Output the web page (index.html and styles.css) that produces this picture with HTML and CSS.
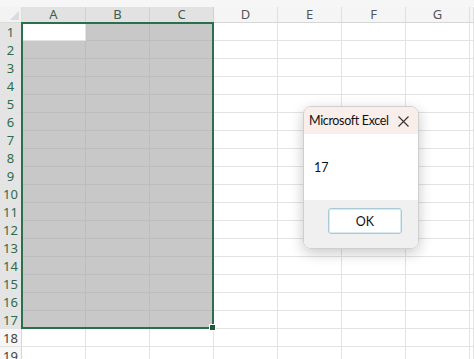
FILE: index.html
```html
<!DOCTYPE html>
<html lang="en">
<head>
  <meta charset="UTF-8" />
  <title>Microsoft Excel</title>
  <link rel="stylesheet" href="styles.css">
</head>
<body>
  <div class="topbar"></div>
  <div class="sheet" id="sheet">
    <div class="selection"><span class="handle"></span></div>
  </div>

  <div class="msgbox">
    <div class="msg-title">
      <span>Microsoft Excel</span>
      <svg class="close" width="11" height="11" viewBox="0 0 11 11">
        <path d="M0.5 0.5 L10.5 10.5 M10.5 0.5 L0.5 10.5" stroke="#333" stroke-width="1.1" fill="none"/>
      </svg>
    </div>
    <div class="msg-body">17</div>
    <div class="msg-foot">
      <button class="ok">OK</button>
    </div>
  </div>

  <script>
    // last column is only a sliver, its letter sits off screen
    const cols = ['A','B','C','D','E','F','G',''];
    const sheet = document.getElementById('sheet');
    let html = '<div class="corner"></div>';
    cols.forEach((c, i) => {
      html += `<div class="colhead${i < 3 ? ' sel' : ''}">${c}</div>`;
    });
    for (let r = 1; r <= 19; r++) {
      html += `<div class="rowhead${r <= 17 ? ' sel' : ''}">${r}</div>`;
      cols.forEach((c, i) => {
        let cls = 'cell';
        if (i < 3 && r <= 17) cls += (i === 0 && r === 1) ? ' active' : ' picked';
        html += `<div class="${cls}"></div>`;
      });
    }
    sheet.insertAdjacentHTML('afterbegin', html);
  </script>
</body>
</html>
```

FILE: styles.css
```css
body {
  margin: 0;
  font-family: "Noto Sans", "Open Sans", sans-serif;
  background: #fff;
  overflow: hidden;
  position: relative;
  height: 359px;
}
.topbar { height: 7px; background: #f6f6f6; }

.sheet {
  position: relative;
  display: grid;
  grid-template-columns: 22px repeat(7, 64px) 1fr;
  grid-template-rows: 16px repeat(19, 18px);
}
.sheet > div { box-sizing: border-box; }

.corner {
  background: #f3f3f3;
  border-right: 1px solid #dcdcdc;
  border-bottom: 1px solid #dcdcdc;
  position: relative;
}
.corner::after {
  content: "";
  position: absolute;
  right: 2px; bottom: 2px;
  border-left: 9px solid transparent;
  border-bottom: 9px solid #dadada;
}
.colhead {
  background: #f5f5f5;
  color: #555;
  font-size: 13px;
  line-height: 15px;
  text-align: center;
  border-right: 1px solid #e0e0e0;
  border-bottom: 1px solid #d6d6d6;
}
.colhead.sel { background: #e2e2e2; color: #3c5e4c; border-right-color: #d2d2d2; }
.rowhead {
  background: #f7f7f7;
  color: #444;
  font-size: 13px;
  line-height: 18px;
  text-align: center;
  border-right: 1px solid #d6d6d6;
  border-bottom: 1px solid #e3e3e3;
}
.rowhead.sel { background: #e4e4e4; color: #2e6b4b; }
.cell {
  border-right: 1px solid #e3e3e3;
  border-bottom: 1px solid #e3e3e3;
}
.cell.picked { background: #c8c8c8; border-color: #bdbdbd; }
.cell.active { background: #fff; }

.selection {
  position: absolute;
  grid-column: 2 / 5;
  grid-row: 2 / 19;
  top: -1px; left: -1px; right: 0; bottom: 0;
  border: 2px solid #2b6f4c;
  z-index: 1;
}
.handle {
  position: absolute;
  right: -4px; bottom: -4px;
  width: 5px; height: 5px;
  background: #1f5a3c;
  border: 1px solid #fff;
}

.msgbox {
  position: absolute;
  left: 303px; top: 106px;
  width: 116px; height: 143px;
  border: 1px solid #cfcfcf;
  border-radius: 8px;
  box-sizing: border-box;
  overflow: hidden;
  box-shadow: 0 4px 14px rgba(0, 0, 0, 0.22);
  display: flex;
  flex-direction: column;
  z-index: 2;
  font-family: Lato, "Noto Sans", sans-serif;
}
.msg-title {
  height: 27px;
  background: #faeeeb;
  display: flex;
  align-items: center;
  justify-content: space-between;
  padding: 0 9px 0 5px;
  font-size: 12.5px;
  letter-spacing: -0.35px;
  color: #111;
  white-space: nowrap;
}
.close { margin-top: 1px; }
.msg-body {
  height: 66px;
  background: #fff;
  padding-left: 10px;
  font-size: 12.5px;
  line-height: 68px;
  color: #111;
}
.msg-foot {
  flex: 1;
  background: #f0f0f0;
  padding: 8px 0 0 24px;
}
.ok {
  width: 74px; height: 26px;
  background: #fff;
  border: 1px solid #a9cbd8;
  box-shadow: inset 0 0 0 1px #d9ebf2;
  border-radius: 3px;
  font-family: inherit;
  font-size: 12.5px;
  color: #111;
  padding: 0;
}
```
